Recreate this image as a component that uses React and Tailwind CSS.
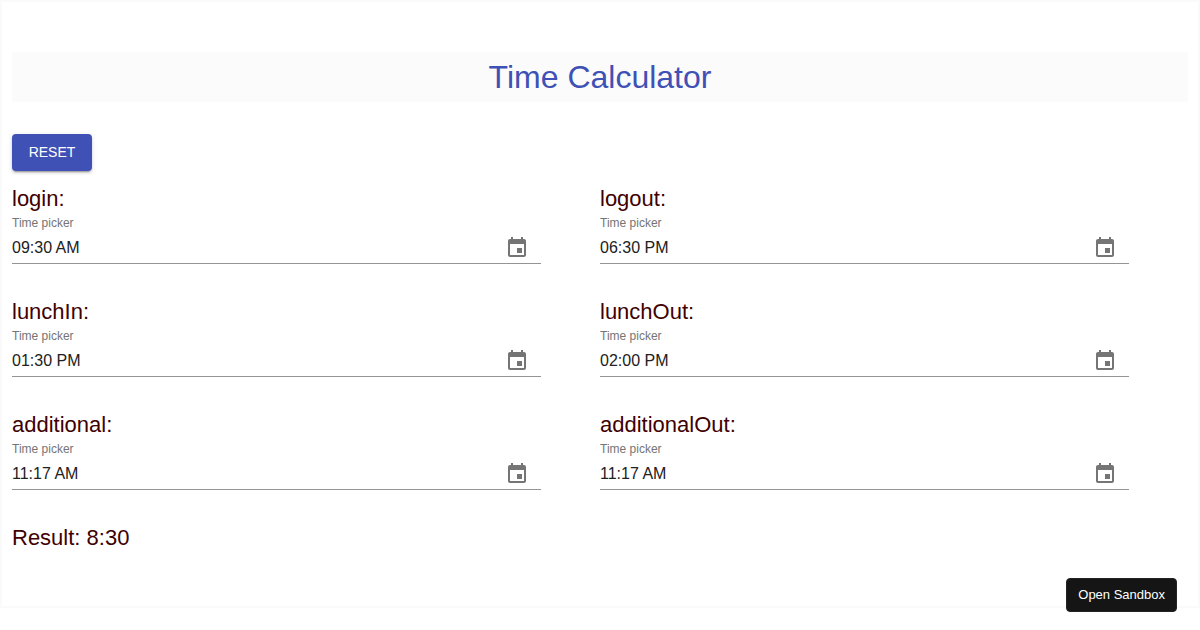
import React, { useState } from 'react';

const initialTimes = {
  login: '09:30 AM',
  logout: '06:30 PM',
  lunchIn: '01:30 PM',
  lunchOut: '02:00 PM',
  additional: '11:17 AM',
  additionalOut: '11:17 AM',
};

const toMinutes = (time) => {
  const match = /^(\d+):(\d+) (AM|PM)$/i.exec(time.trim());
  if (!match) return 0;
  const hours = (Number(match[1]) % 12) + (match[3].toUpperCase() === 'PM' ? 12 : 0);
  return hours * 60 + Number(match[2]);
};

const getResult = (times) => {
  const total =
    toMinutes(times.logout) - toMinutes(times.login) -
    (toMinutes(times.lunchOut) - toMinutes(times.lunchIn)) -
    (toMinutes(times.additionalOut) - toMinutes(times.additional));
  const minutes = Math.max(total, 0);
  return `${Math.floor(minutes / 60)}:${String(minutes % 60).padStart(2, '0')}`;
};

const EventIcon = () => (
  <svg viewBox="0 0 24 24" className="h-6 w-6 fill-current" aria-hidden="true">
    <path d="M17 12h-5v5h5v-5zM16 1v2H8V1H6v2H5c-1.11 0-1.99.9-1.99 2L3 19c0 1.1.89 2 2 2h14c1.1 0 2-.9 2-2V5c0-1.1-.9-2-2-2h-1V1h-2zm3 18H5V8h14v11z" />
  </svg>
);

const TimeField = ({ name, value, onChange }) => (
  <div>
    <h2 className="text-[22px] leading-[26px] text-[#400000]">{name}:</h2>
    <div className="w-9/10 border-b border-[#949494] pt-[3px]">
      <label htmlFor={name} className="block text-xs leading-4 text-[#757575]">
        Time picker
      </label>
      <div className="flex h-8 items-center pt-0.5">
        <input
          id={name}
          type="text"
          value={value}
          onChange={(e) => onChange(name, e.target.value)}
          className="min-w-0 flex-1 bg-transparent text-base text-[#212121] outline-none"
        />
        <button type="button" aria-label="change time" className="mr-3 text-[#757575]">
          <EventIcon />
        </button>
      </div>
    </div>
  </div>
);

const App = () => {
  const [times, setTimes] = useState(initialTimes);

  const handleChange = (name, value) => setTimes({ ...times, [name]: value });

  return (
    <div className="font-['Liberation_Sans',Arial,sans-serif]">
      <main className="border-2 border-[#fafafa] px-2.5 pt-[50px] pb-[55px]">
        <h1 className="bg-[#fbfbfb] py-[5px] text-center text-[32px] leading-10 text-[#3f51b5]">
          Time Calculator
        </h1>
        <button
          type="button"
          onClick={() => setTimes(initialTimes)}
          className="mt-8 block min-w-20 rounded bg-[#3f51b5] px-4 py-1.5 text-sm leading-[25px] text-white shadow-[0_3px_1px_-2px_rgba(0,0,0,0.2),0_2px_2px_0_rgba(0,0,0,0.14),0_1px_5px_0_rgba(0,0,0,0.12)]"
        >
          RESET
        </button>
        <div className="mt-[15px] grid grid-cols-2 gap-y-[35px]">
          {Object.keys(times).map((name) => (
            <TimeField key={name} name={name} value={times[name]} onChange={handleChange} />
          ))}
        </div>
        <p className="mt-[35px] text-[22px] leading-[26px] text-[#400000]">
          Result: {getResult(times)}
        </p>
      </main>
      <button
        type="button"
        className="fixed right-[23px] bottom-[18px] rounded border border-[#242424] bg-[#151515] px-[11px] py-2 text-[13px] leading-4 text-white"
      >
        Open Sandbox
      </button>
    </div>
  );
};

export default App;
